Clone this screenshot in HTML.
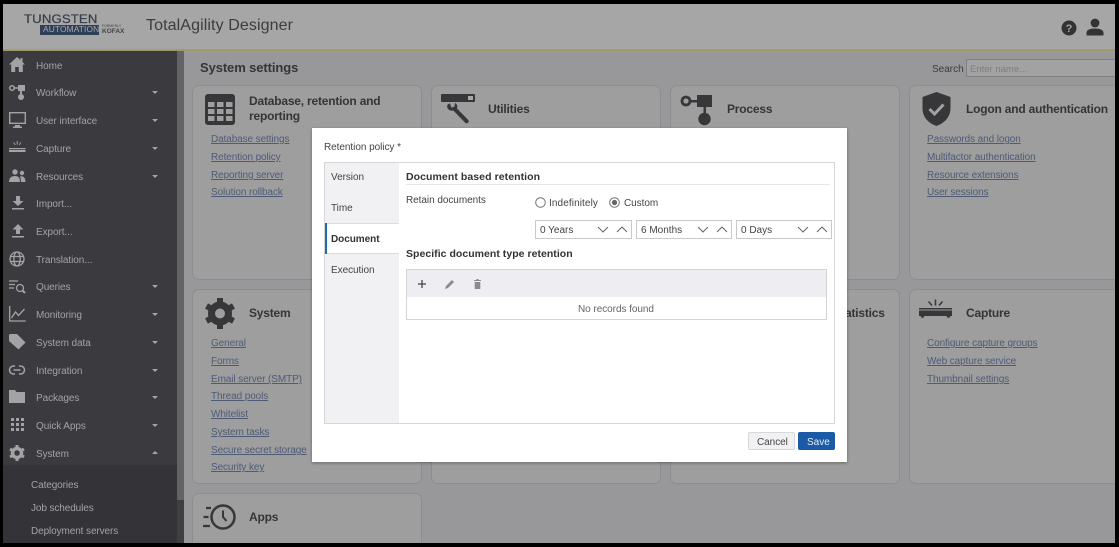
<!DOCTYPE html>
<html><head><meta charset="utf-8">
<style>
html,body{margin:0;padding:0;width:1119px;height:547px;overflow:hidden;background:#000}
*{box-sizing:border-box}
body{font-family:"Liberation Sans","Noto Sans CJK JP",sans-serif;position:relative}
#w{position:absolute;left:0;top:0;width:1119px;height:547px;overflow:hidden;filter:blur(.3px)}
.t{position:absolute;white-space:nowrap;line-height:14px;font-size:10px}
.a{position:absolute}
.n{color:#a3a3a5;left:36px;letter-spacing:-.08px;margin-top:1px}
.s{color:#a3a3a5;left:31px;letter-spacing:-.1px;margin-top:1px}
.ar{position:absolute;left:152px;width:0;height:0;border-left:3.5px solid transparent;border-right:3.5px solid transparent;border-top:3.5px solid #a3a3a5}
.up{border-top:0;border-bottom:3.5px solid #a3a3a5}
.c{position:absolute;background:#9e9e9f;border:1px solid #8d8d8e;border-radius:7px}
.h{color:#353537;font-weight:bold;font-size:12px;line-height:16px;letter-spacing:-.2px}
.l{color:#4d5b75;text-decoration:underline;letter-spacing:-.1px;margin-top:1px}
.d{color:#444;font-size:10px;letter-spacing:-.05px;margin-top:1px}
.b{font-weight:bold;color:#333}
.sel{position:absolute;top:220px;height:19px;background:#fff;border:1px solid #c9c9c9}
.sel span{position:absolute;left:4px;top:3px;font-size:10px;line-height:14px;color:#444}
.sel svg{position:absolute;right:2px;top:4px}
svg{position:absolute;overflow:visible}
</style></head>
<body><div id="w">
<div class="a" style="left:3px;top:4px;width:1112px;height:539px;background:#98989a;overflow:hidden"></div>

<!-- header -->
<div class="a" style="left:3px;top:4px;width:1112px;height:46px;background:#a6a6a6"></div>
<div class="a" style="left:3px;top:49px;width:1112px;height:2px;background:#a39a6a"></div>
<div class="t" style="left:24px;top:12px;font-size:12px;letter-spacing:.1px;color:#363c49;line-height:14px;transform:scaleX(1.1);transform-origin:left;-webkit-text-stroke:.2px #363c49">TUNGSTEN</div>
<div class="a" style="left:40px;top:25px;width:59px;height:10px;background:#2f3f58"></div>
<div class="t" style="left:43px;top:25px;font-size:8px;line-height:10px;color:#a6a9ad;letter-spacing:.1px;transform:scaleX(1.05);transform-origin:left">AUTOMATION</div>
<div class="t" style="left:102px;top:24px;font-size:3.5px;line-height:5px;color:#444">FORMERLY</div>
<div class="t" style="left:102px;top:28px;font-size:6.5px;line-height:8px;font-weight:bold;color:#444">KOFAX</div>
<div class="t" style="left:146px;top:16px;font-size:16px;line-height:20px;color:#3c3c3e;letter-spacing:.1px">TotalAgility Designer</div>
<svg style="left:1061px;top:20px" width="16" height="16" viewBox="0 0 16 16"><circle cx="8" cy="8" r="7.5" fill="#333"/><text x="8" y="12" text-anchor="middle" font-size="11" font-weight="bold" fill="#a6a6a6" font-family="Liberation Sans">?</text></svg>
<svg style="left:1085px;top:17px" width="20" height="20" viewBox="0 0 20 20"><circle cx="10" cy="6" r="4.4" fill="#333"/><path d="M1.5 18.500v-2.500c0-3 3-4.500 8.500-4.500s8.500 1.500 8.500 4.500v2.500z" fill="#333"/></svg>

<!-- sidebar -->
<div class="a" style="left:3px;top:51px;width:174px;height:492px;background:#3b3b3f"></div>
<div class="a" style="left:3px;top:465px;width:174px;height:78px;background:#343438"></div>
<div class="a" style="left:177px;top:51px;width:7px;height:492px;background:#636365"></div>
<div class="a" style="left:177px;top:500px;width:7px;height:43px;background:#3f3f42"></div>

<div class="t n" style="top:59px">Home</div>
<div class="t n" style="top:86px">Workflow</div><div class="ar" style="top:91px"></div>
<div class="t n" style="top:114px">User interface</div><div class="ar" style="top:119px"></div>
<div class="t n" style="top:142px">Capture</div><div class="ar" style="top:147px"></div>
<div class="t n" style="top:170px">Resources</div><div class="ar" style="top:175px"></div>
<div class="t n" style="top:197px">Import...</div>
<div class="t n" style="top:225px">Export...</div>
<div class="t n" style="top:253px">Translation...</div>
<div class="t n" style="top:280px">Queries</div><div class="ar" style="top:285px"></div>
<div class="t n" style="top:308px">Monitoring</div><div class="ar" style="top:313px"></div>
<div class="t n" style="top:336px">System data</div><div class="ar" style="top:341px"></div>
<div class="t n" style="top:364px">Integration</div><div class="ar" style="top:369px"></div>
<div class="t n" style="top:391px">Packages</div><div class="ar" style="top:396px"></div>
<div class="t n" style="top:419px">Quick Apps</div><div class="ar" style="top:424px"></div>
<div class="t n" style="top:447px">System</div><div class="ar up" style="top:451px"></div>
<div class="t s" style="top:478px">Categories</div>
<div class="t s" style="top:501px">Job schedules</div>
<div class="t s" style="top:524px">Deployment servers</div>

<!-- sidebar icons -->
<svg style="left:9px;top:57px" width="16" height="15" viewBox="0 0 16 15"><path d="M8 0L0 7.500h2.200V15h4v-5h3.600v5h4V7.500H16L13.500 5V1h-2v2z" fill="#a3a3a5"/></svg>
<svg style="left:9px;top:84px" width="17" height="17" viewBox="0 0 17 17" fill="#a3a3a5"><circle cx="3" cy="4" r="2.300" fill="none" stroke="#a3a3a5" stroke-width="1.500"/><path d="M5 3.300h4V1h7v6h-3v3h-2V7H9V4.800H5z"/><circle cx="12" cy="13" r="3"/></svg>
<svg style="left:9px;top:112px" width="17" height="16" viewBox="0 0 17 16"><rect x=".7" y=".7" width="15.600" height="10.600" fill="none" stroke="#a3a3a5" stroke-width="1.400"/><path d="M6 13h5v1.500h2V16H4v-1.500h2z" fill="#a3a3a5"/></svg>
<svg style="left:9px;top:140px" width="17" height="13" viewBox="0 0 17 13"><path d="M0 8h16.500v1.200H0zM0 10h16.500v2H0z" fill="#a3a3a5"/><path d="M8.200 1v3.500M4.500 2.500l1.800 2.300M12 2.500l-1.800 2.300" stroke="#a3a3a5"/></svg>
<svg style="left:9px;top:169px" width="17" height="14" viewBox="0 0 17 14" fill="#a3a3a5"><circle cx="6" cy="3" r="2.700"/><circle cx="13" cy="4" r="2.200"/><path d="M0 13c0-4 2-6 6-6s5 2 5 6zM12 13c0-2-.3-4-1-5.500 3-1 5.500 1 5.500 5.500z"/></svg>
<svg style="left:11px;top:196px" width="14" height="14" viewBox="0 0 14 14" fill="#a3a3a5"><path d="M5 0h4v5h3.500L7 10 1.500 5H5zM1 12h12v1.500H1z"/></svg>
<svg style="left:11px;top:224px" width="14" height="14" viewBox="0 0 14 14" fill="#a3a3a5"><path d="M7 0l5.500 5.500H9V10H5V5.500H1.500zM1 12h12v1.500H1z"/></svg>
<svg style="left:9px;top:251px" width="16" height="16" viewBox="0 0 16 16" fill="none" stroke="#a3a3a5" stroke-width="1.300"><circle cx="8" cy="8" r="7"/><ellipse cx="8" cy="8" rx="3.200" ry="7"/><path d="M1 5.500h14M1 10.500h14"/></svg>
<svg style="left:9px;top:280px" width="17" height="14" viewBox="0 0 17 14" fill="none" stroke="#a3a3a5" stroke-width="1.300"><path d="M0 1h9M0 4.500h6M0 8h5"/><circle cx="11" cy="8" r="3.500"/><path d="M13.500 10.500L16 13" stroke-width="2"/></svg>
<svg style="left:9px;top:306px" width="17" height="16" viewBox="0 0 17 16" fill="none" stroke="#a3a3a5" stroke-width="1.300"><path d="M.7 0v15h16"/><path d="M2.500 12L6.500 6l3 3.500L15.500 3"/></svg>
<svg style="left:9px;top:334px" width="17" height="16" viewBox="0 0 17 16"><path d="M0 1.500C0 .6.600 0 1.500 0H8l8.500 8.500-7 7L0 7z" fill="#a3a3a5"/></svg>
<svg style="left:9px;top:365px" width="16" height="10" viewBox="0 0 16 10" fill="none" stroke="#a3a3a5" stroke-width="1.500"><path d="M6 1H4.500a4 4 0 0 0 0 8H6M10 1h1.500a4 4 0 0 1 0 8H10"/><path d="M4.500 5h7" stroke-width="1.500"/></svg>
<svg style="left:9px;top:390px" width="16" height="13" viewBox="0 0 16 13"><path d="M0 0h6l1.500 2H16v11H0z" fill="#a3a3a5"/></svg>
<svg style="left:11px;top:418px" width="13" height="13" viewBox="0 0 13 13" fill="#a3a3a5"><rect x="0" y="0" width="3" height="3"/><rect x="5" y="0" width="3" height="3"/><rect x="10" y="0" width="3" height="3"/><rect x="0" y="5" width="3" height="3"/><rect x="5" y="5" width="3" height="3"/><rect x="10" y="5" width="3" height="3"/><rect x="0" y="10" width="3" height="3"/><rect x="5" y="10" width="3" height="3"/><rect x="10" y="10" width="3" height="3"/></svg>
<svg style="left:9px;top:445px" width="16" height="16" viewBox="-8 -8 16 16"><circle r="4.500" fill="none" stroke="#a3a3a5" stroke-width="3.500"/><g stroke="#a3a3a5" stroke-width="3"><path d="M0-8v3M0 8V5M-7-4l2.500 1.500M7 4L4.500 2.500M-7 4l2.500-1.500M7-4L4.500-2.500"/></g></svg>

<!-- main -->
<div class="t" style="left:200px;top:60px;font-size:13px;line-height:16px;font-weight:bold;color:#353537;letter-spacing:-.1px">System settings</div>
<div class="t" style="left:932px;top:63px;color:#3c3c3e">Search</div>
<div class="a" style="left:966px;top:59px;width:149px;height:18px;background:#a2a2a3;border:1px solid #808081;border-right:0"></div>
<div class="t" style="left:970px;top:63px;color:#7e7e80;font-size:9.5px">Enter name...</div>

<div class="c" style="left:192px;top:85px;width:230px;height:195px"></div>
<div class="c" style="left:431px;top:85px;width:230px;height:195px"></div>
<div class="c" style="left:670px;top:85px;width:230px;height:195px"></div>
<div class="c" style="left:909px;top:85px;width:220px;height:195px"></div>
<div class="c" style="left:192px;top:289px;width:230px;height:195px"></div>
<div class="c" style="left:431px;top:289px;width:230px;height:195px"></div>
<div class="c" style="left:670px;top:289px;width:230px;height:195px"></div>
<div class="c" style="left:909px;top:289px;width:220px;height:195px"></div>
<div class="c" style="left:192px;top:493px;width:230px;height:70px"></div>
<div class="a" style="left:0;top:543px;width:1119px;height:4px;background:#000"></div>
<div class="a" style="left:1115px;top:0;width:4px;height:547px;background:#000"></div>

<div class="t h" style="left:249px;top:93px">Database, retention and</div>
<div class="t h" style="left:249px;top:108px">reporting</div>
<div class="t h" style="left:488px;top:101px">Utilities</div>
<div class="t h" style="left:727px;top:101px">Process</div>
<div class="t h" style="left:966px;top:101px">Logon and authentication</div>
<div class="t h" style="left:249px;top:305px">System</div>
<div class="t h" style="left:966px;top:305px">Capture</div>
<div class="t h" style="left:249px;top:509px">Apps</div>
<div class="t h" style="left:845px;top:305px">atistics</div>

<div class="t l" style="left:211px;top:132px">Database settings</div>
<div class="t l" style="left:211px;top:150px">Retention policy</div>
<div class="t l" style="left:211px;top:168px">Reporting server</div>
<div class="t l" style="left:211px;top:185px">Solution rollback</div>
<div class="t l" style="left:927px;top:132px">Passwords and logon</div>
<div class="t l" style="left:927px;top:150px">Multifactor authentication</div>
<div class="t l" style="left:927px;top:168px">Resource extensions</div>
<div class="t l" style="left:927px;top:185px">User sessions</div>
<div class="t l" style="left:211px;top:336px">General</div>
<div class="t l" style="left:211px;top:354px">Forms</div>
<div class="t l" style="left:211px;top:372px">Email server (SMTP)</div>
<div class="t l" style="left:211px;top:389px">Thread pools</div>
<div class="t l" style="left:211px;top:407px">Whitelist</div>
<div class="t l" style="left:211px;top:425px">System tasks</div>
<div class="t l" style="left:211px;top:443px">Secure secret storage</div>
<div class="t l" style="left:211px;top:460px">Security key</div>
<div class="t l" style="left:927px;top:336px">Configure capture groups</div>
<div class="t l" style="left:927px;top:354px">Web capture service</div>
<div class="t l" style="left:927px;top:372px">Thumbnail settings</div>

<!-- card icons -->
<svg style="left:205px;top:94px" width="30" height="31" viewBox="0 0 30 31"><rect width="30" height="31" rx="3" fill="#37373a"/><g fill="#9e9e9f"><rect x="3" y="8" width="6.500" height="5"/><rect x="12" y="8" width="6.500" height="5"/><rect x="21" y="8" width="6.500" height="5"/><rect x="3" y="15" width="6.500" height="5"/><rect x="12" y="15" width="6.500" height="5"/><rect x="21" y="15" width="6.500" height="5"/><rect x="3" y="22" width="6.500" height="5"/><rect x="12" y="22" width="6.500" height="5"/><rect x="21" y="22" width="6.500" height="5"/></g></svg>
<svg style="left:441px;top:93px" width="35" height="32" viewBox="0 0 35 32"><rect x="0" y="1" width="34" height="8" rx="1" fill="#37373a"/><rect x="27" y="3" width="5" height="4" fill="#a8a8a8"/><path d="M9 10.500c-2.500.5-3.500 2-2.500 4.500 .8 2 3.500 3.200 5.800 2.500L24.500 30c1.500 1.200 4-1 3-2.800L16 15.500c.8-2.200.2-4.500-2-5.500l-.5 3.500-3 1.200z" fill="#37373a"/></svg>
<svg style="left:680px;top:95px" width="33" height="31" viewBox="0 0 33 31"><circle cx="6" cy="6" r="4" fill="none" stroke="#37373a" stroke-width="2.800"/><rect x="10" y="5" width="8" height="2.500" fill="#37373a"/><rect x="17" y="0" width="15" height="12" fill="#37373a"/><rect x="23.500" y="12" width="2.500" height="8" fill="#37373a"/><circle cx="24.500" cy="24" r="6.200" fill="#37373a"/></svg>
<svg style="left:922px;top:92px" width="29" height="34" viewBox="0 0 29 34"><path d="M14.500 0L28.500 5v11c0 9-6 15-14 18C6 31 .5 25 .5 16V5z" fill="#37373a"/><path d="M7.500 17l5 5 9-9.500" fill="none" stroke="#a2a2a3" stroke-width="3"/></svg>
<svg style="left:205px;top:298px" width="30" height="31" viewBox="-15 -15.500 30 31"><circle r="8.500" fill="none" stroke="#37373a" stroke-width="7"/><g stroke="#37373a" stroke-width="6"><path d="M0-15.500v5M0 15.500v-5M-13.500 -7.500l4.500 2.500M13.500 7.500L9 5M-13.500 7.500L-9 5M13.500-7.500L9-5"/></g></svg>
<svg style="left:919px;top:299px" width="33" height="20" viewBox="0 0 33 20"><path d="M0 9h33v1.500H0z" fill="#37373a"/><path d="M0 11.500h33v5.500H0z" fill="#37373a"/><circle cx="3.500" cy="17" r="1.800" fill="#37373a"/><circle cx="29.500" cy="17" r="1.800" fill="#37373a"/><path d="M16.500 .5v6M9.500 2.500l3.500 4M23.500 2.500l-3.500 4" stroke="#37373a" stroke-width="1.500"/></svg>
<svg style="left:203px;top:504px" width="35" height="26" viewBox="0 0 35 26"><circle cx="20" cy="13" r="11.500" fill="none" stroke="#37373a" stroke-width="2.500"/><path d="M20 6.500V13l3.500 4" fill="none" stroke="#37373a" stroke-width="2"/><path d="M3 4h5M0.500 13h5M0 22h7" stroke="#37373a" stroke-width="2.200"/></svg>

<!-- modal -->
<div class="a" style="left:312px;top:128px;width:535px;height:334px;background:#fff;box-shadow:0 1px 3px rgba(0,0,0,.35)"></div>
<div class="t d" style="left:324px;top:140px">Retention policy *</div>
<div class="a" style="left:324px;top:162px;width:511px;height:262px;border:1px solid #d6d6d6;background:#fff"></div>
<div class="a" style="left:325px;top:163px;width:74px;height:260px;background:#f1f1f3"></div>
<div class="a" style="left:325px;top:223px;width:74px;height:31px;background:#fff;border-top:1px solid #dcdcdc;border-bottom:1px solid #dcdcdc"></div>
<div class="a" style="left:325px;top:223px;width:2px;height:31px;background:#1a70a8"></div>
<div class="t d" style="left:331px;top:170px">Version</div>
<div class="t d" style="left:331px;top:201px">Time</div>
<div class="t d b" style="left:331px;top:232px">Document</div>
<div class="t d" style="left:331px;top:263px">Execution</div>
<div class="t b" style="left:406px;top:170px;font-size:10.5px;letter-spacing:.07px">Document based retention</div>
<div class="a" style="left:406px;top:184px;width:424px;height:1px;background:#e6e6e6"></div>
<div class="t d" style="left:406px;top:193px">Retain documents</div>
<svg style="left:535px;top:197px" width="11" height="11"><circle cx="5.500" cy="5.500" r="4.800" fill="#fff" stroke="#777"/></svg>
<div class="t d" style="left:549px;top:196px;letter-spacing:.1px">Indefinitely</div>
<svg style="left:609px;top:197px" width="11" height="11"><circle cx="5.500" cy="5.500" r="4.800" fill="#fff" stroke="#777"/><circle cx="5.500" cy="5.500" r="2.600" fill="#666"/></svg>
<div class="t d" style="left:624px;top:196px">Custom</div>

<div class="sel" style="left:535px;width:97px"><span>0 Years</span><svg style="right:auto;left:61px" width="32" height="10" viewBox="0 0 32 10" fill="none" stroke="#666"><path d="M1 2l5 5 5-5M20 7l5-5 5 5"/></svg></div>
<div class="sel" style="left:636px;width:96px"><span>6 Months</span><svg style="right:auto;left:60px" width="32" height="10" viewBox="0 0 32 10" fill="none" stroke="#666"><path d="M1 2l5 5 5-5M20 7l5-5 5 5"/></svg></div>
<div class="sel" style="left:736px;width:96px"><span>0 Days</span><svg style="right:auto;left:60px" width="32" height="10" viewBox="0 0 32 10" fill="none" stroke="#666"><path d="M1 2l5 5 5-5M20 7l5-5 5 5"/></svg></div>

<div class="t b" style="left:406px;top:247px;font-size:10.5px;letter-spacing:.03px">Specific document type retention</div>
<div class="a" style="left:406px;top:269px;width:421px;height:51px;border:1px solid #d4d4d4;background:#fff"></div>
<div class="a" style="left:407px;top:270px;width:419px;height:27px;background:#eeeef2"></div>
<svg style="left:418px;top:280px" width="8" height="8"><path d="M4 0v8M0 4h8" stroke="#444" stroke-width="1.300"/></svg>
<svg style="left:445px;top:279px" width="10" height="10" viewBox="0 0 10 10"><path d="M0 10l1-3L7 1l2 2-6 6z" fill="#8b8b8b"/></svg>
<svg style="left:474px;top:279px" width="7" height="10" viewBox="0 0 7 10"><path d="M0 1h2.500V0h2v1H7v1H0zM.7 3h5.600v7H.7z" fill="#8b8b8b"/></svg>
<div class="t d" style="left:578px;top:302px;color:#666;font-size:10px">No records found</div>

<div class="a" style="left:748px;top:432px;width:47px;height:18px;background:#f1f1f3;border:1px solid #d8d8d8;border-radius:2px"></div>
<div class="t d" style="left:757px;top:435px">Cancel</div>
<div class="a" style="left:798px;top:432px;width:37px;height:18px;background:#1a5aa6;border-radius:2px"></div>
<div class="t" style="left:807px;top:436px;color:#e8eef6">Save</div>
</div></body></html>
